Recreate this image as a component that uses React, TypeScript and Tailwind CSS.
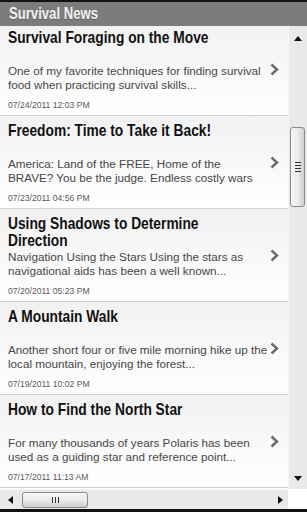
import React from "react";

type Item = { title: string[]; desc: string[]; date: string };

const items: Item[] = [
  {
    title: ["Survival Foraging on the Move"],
    desc: ["One of my favorite techniques for finding survival", "food when practicing survival skills..."],
    date: "07/24/2011 12:03 PM",
  },
  {
    title: ["Freedom: Time to Take it Back!"],
    desc: ["America: Land of the FREE, Home of the", "BRAVE? You be the judge. Endless costly wars"],
    date: "07/23/2011 04:56 PM",
  },
  {
    title: ["Using Shadows to Determine", "Direction"],
    desc: ["Navigation Using the Stars Using the stars as", "navigational aids has been a well known..."],
    date: "07/20/2011 05:23 PM",
  },
  {
    title: ["A Mountain Walk"],
    desc: ["Another short four or five mile morning hike up the", "local mountain, enjoying the forest..."],
    date: "07/19/2011 10:02 PM",
  },
  {
    title: ["How to Find the North Star"],
    desc: ["For many thousands of years Polaris has been", "used as a guiding star and reference point..."],
    date: "07/17/2011 11:13 AM",
  },
];

const narrow = { fontFamily: '"Liberation Sans", Arial, sans-serif' };

function Chevron() {
  return (
    <svg width="9" height="13" viewBox="0 0 9 13" className="block">
      <polyline points="1.5,1.5 7,6.5 1.5,11.5" fill="none" stroke="#6b6b6b" strokeWidth="2.4" />
    </svg>
  );
}

function Row({ item, first }: { item: Item; first?: boolean }) {
  return (
    <div
      className={`relative flex h-[93px] shrink-0 border-b border-[#cfcfcf] bg-gradient-to-b from-[#f1f1f1] to-[#ffffff] ${first ? "mt-[-3px]" : ""}`}
    >
      <div className="flex w-[270px] flex-col pl-[8px] pt-[6px]">
        <div className="h-[35px]">
          <div
            className="w-[255px] origin-top-left scale-x-[0.81] text-[17px] font-bold leading-[17px] text-[#111]"
            style={narrow}
          >
            {item.title.map((t, i) => (
              <div key={i} className="whitespace-nowrap">
                {t}
              </div>
            ))}
          </div>
        </div>
        <div
          className="h-[28px] overflow-hidden text-[11.7px] leading-[14px] text-[#474747]"
          style={{ fontFamily: '"Liberation Sans", Arial, sans-serif' }}
        >
          {item.desc.map((d, i) => (
            <div key={i} className="whitespace-nowrap">
              {d}
            </div>
          ))}
        </div>
        <div
          className="mt-[8px] text-[8.6px] leading-[10px] text-[#5a5a5a]"
          style={{ fontFamily: '"Liberation Sans", Arial, sans-serif' }}
        >
          {item.date}
        </div>
      </div>
      <div className="pt-[40px]">
        <Chevron />
      </div>
    </div>
  );
}

export default function App() {
  return (
    <div className="flex h-[512px] w-[307px] flex-col overflow-hidden bg-black">
      <div className="h-[2px] shrink-0 bg-[#111]" />
      <div className="flex h-[24px] shrink-0 items-center bg-[#7c7c7c] pl-[9px]">
        <div
          className="origin-left scale-x-[0.82] whitespace-nowrap text-[16px] font-bold leading-[16px] text-[#f2f2f2]"
          style={{ ...narrow, textShadow: "0 1px 0 rgba(0,0,0,0.25)" }}
        >
          Survival News
        </div>
      </div>
      <div className="flex h-[463px] shrink-0">
        <div className="flex w-[288px] flex-col overflow-hidden bg-white">
          {items.map((it, i) => (
            <Row key={i} item={it} first={i === 0} />
          ))}
        </div>
        <div className="relative flex w-[19px] flex-col border-l border-[#f6f6f6] bg-[#e9e9e9]">
          <div className="flex h-[20px] items-center justify-center pt-[4px]">
            <svg width="8" height="5" viewBox="0 0 8 5">
              <polygon points="0,5 8,5 4,0" fill="#111" />
            </svg>
          </div>
          <div className="mt-[81px] ml-[1px] flex h-[80px] w-[15px] items-center justify-center rounded-[3px] border border-[#8a8a8a] bg-gradient-to-r from-[#f7f7f7] via-[#ececec] to-[#cfcfcf]">
            <div className="flex flex-col gap-[2px]">
              <div className="h-[1px] w-[6px] bg-[#333]" />
              <div className="h-[1px] w-[6px] bg-[#333]" />
              <div className="h-[1px] w-[6px] bg-[#333]" />
              <div className="h-[1px] w-[6px] bg-[#333]" />
            </div>
          </div>
          <div className="flex-1" />
          <div className="flex h-[20px] items-center justify-center pb-[2px]">
            <svg width="8" height="5" viewBox="0 0 8 5">
              <polygon points="0,0 8,0 4,5" fill="#111" />
            </svg>
          </div>
        </div>
      </div>
      <div className="flex h-[20px] shrink-0">
        <div className="flex w-[288px] items-center border-t border-[#f4f4f4] bg-[#e9e9e9]">
          <div className="flex w-[20px] items-center justify-center">
            <svg width="5" height="8" viewBox="0 0 5 8">
              <polygon points="5,0 5,8 0,4" fill="#111" />
            </svg>
          </div>
          <div className="ml-[2px] flex h-[16px] w-[66px] items-center justify-center rounded-[3px] border border-[#8a8a8a] bg-gradient-to-b from-[#f7f7f7] via-[#ececec] to-[#cfcfcf]">
            <div className="flex gap-[2px]">
              <div className="h-[6px] w-[1px] bg-[#333]" />
              <div className="h-[6px] w-[1px] bg-[#333]" />
              <div className="h-[6px] w-[1px] bg-[#333]" />
            </div>
          </div>
          <div className="flex-1" />
          <div className="flex w-[16px] items-center justify-center">
            <svg width="5" height="8" viewBox="0 0 5 8">
              <polygon points="0,0 0,8 5,4" fill="#111" />
            </svg>
          </div>
        </div>
        <div className="flex-1 bg-white" />
      </div>
      <div className="h-[3px] shrink-0 bg-[#111]" />
    </div>
  );
}
